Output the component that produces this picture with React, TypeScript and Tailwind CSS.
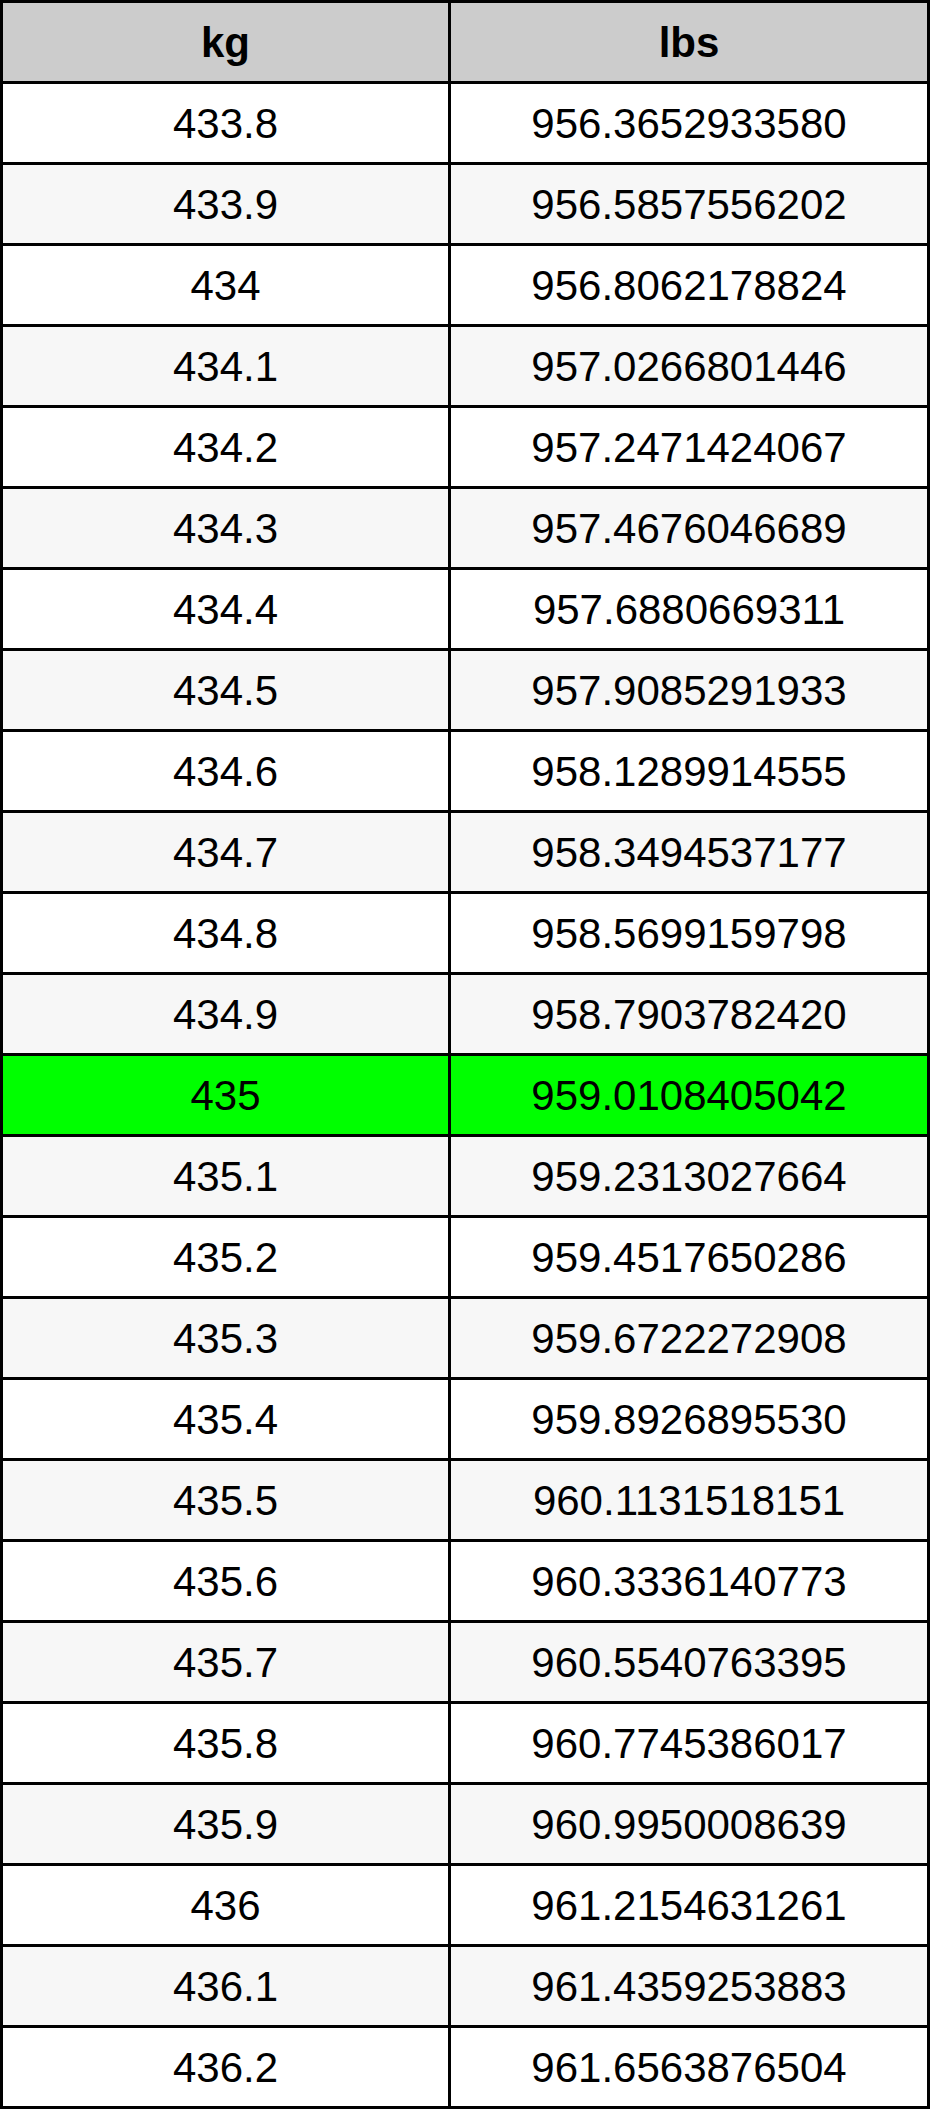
const rows: [string, string][] = [
  ["433.8", "956.3652933580"],
  ["433.9", "956.5857556202"],
  ["434", "956.8062178824"],
  ["434.1", "957.0266801446"],
  ["434.2", "957.2471424067"],
  ["434.3", "957.4676046689"],
  ["434.4", "957.6880669311"],
  ["434.5", "957.9085291933"],
  ["434.6", "958.1289914555"],
  ["434.7", "958.3494537177"],
  ["434.8", "958.5699159798"],
  ["434.9", "958.7903782420"],
  ["435", "959.0108405042"],
  ["435.1", "959.2313027664"],
  ["435.2", "959.4517650286"],
  ["435.3", "959.6722272908"],
  ["435.4", "959.8926895530"],
  ["435.5", "960.1131518151"],
  ["435.6", "960.3336140773"],
  ["435.7", "960.5540763395"],
  ["435.8", "960.7745386017"],
  ["435.9", "960.9950008639"],
  ["436", "961.2154631261"],
  ["436.1", "961.4359253883"],
  ["436.2", "961.6563876504"],
];

export default function App() {
  return (
    <div className="w-[930px] bg-white font-['Liberation_Sans',Arial,sans-serif] text-black">
      <div className="border-[3px] border-black">
        {/* Header */}
        <div className="flex h-[78px] bg-[#cccccc] text-[42px] font-bold">
          <div className="flex w-[448px] items-center justify-center border-r-[3px] border-black">kg</div>
          <div className="flex flex-1 items-center justify-center">lbs</div>
        </div>

        {rows.map(([kg, lbs], i) => {
          const bg = kg === "435" ? "bg-[#00ff00]" : i % 2 === 1 ? "bg-[#f7f7f7]" : "bg-white";
          return (
            <div key={kg} className={`flex h-[81px] border-t-[3px] border-black text-[42px] ${bg}`}>
              <div className="flex w-[448px] items-center justify-center border-r-[3px] border-black">{kg}</div>
              <div className="flex flex-1 items-center justify-center">{lbs}</div>
            </div>
          );
        })}
      </div>
    </div>
  );
}
